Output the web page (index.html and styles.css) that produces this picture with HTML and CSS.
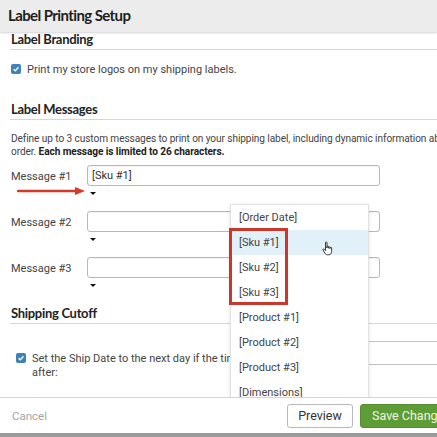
FILE: index.html
```html
<!DOCTYPE html>
<html>
<head>
<meta charset="utf-8">
<link rel="stylesheet" href="styles.css">
</head>
<body>
<div class="dialog">
  <div class="header"><h1 class="title">Label Printing Setup</h1></div>
  <div class="content">
    <section class="sec sec-branding">
      <h2 class="sec-title">Label Branding</h2>
      <label class="check-row">
        <span class="cbox"><svg viewBox="0 0 10 10" width="8" height="8"><path d="M2 5.2 L4.2 7.3 L8 2.8" fill="none" stroke="#fff" stroke-width="1.7"/></svg></span>
        <span>Print my store logos on my shipping labels.</span>
      </label>
    </section>
    <section class="sec sec-messages">
      <h2 class="sec-title">Label Messages</h2>
      <p class="desc">Define up to 3 custom messages to print on your shipping label, including dynamic information about the<br>order. <b>Each message is limited to 26 characters.</b></p>
      <div class="msg-row">
        <span class="msg-label">Message #1</span>
        <div class="msg-field"><div class="input">[Sku #1]</div><span class="caret"></span></div>
      </div>
      <div class="msg-row">
        <span class="msg-label">Message #2</span>
        <div class="msg-field"><div class="input"></div><span class="caret"></span></div>
      </div>
      <div class="msg-row">
        <span class="msg-label">Message #3</span>
        <div class="msg-field"><div class="input"></div><span class="caret"></span></div>
      </div>
    </section>
    <section class="sec sec-cutoff">
      <h2 class="sec-title">Shipping Cutoff</h2>
      <div class="cutoff-row">
        <label class="check-row cutoff-check">
          <span class="cbox"><svg viewBox="0 0 10 10" width="8" height="8"><path d="M2 5.2 L4.2 7.3 L8 2.8" fill="none" stroke="#fff" stroke-width="1.7"/></svg></span>
          <span class="cutoff-text">Set the Ship Date to the next day if the time is after:</span>
        </label>
        <div class="time-box"></div>
      </div>
    </section>
  </div>
  <div class="footer">
    <span class="cancel">Cancel</span>
    <div class="actions">
      <button class="btn btn-preview">Preview</button>
      <button class="btn btn-save">Save Changes</button>
    </div>
  </div>
  <div class="bottom-bar"></div>

  <svg class="annot-arrow" width="70" height="10" viewBox="0 0 70 10">
    <path d="M1 5 H60" stroke="#d23b28" stroke-width="2.4" stroke-linecap="round"/>
    <path d="M58 1 L68 5 L58 9 Z" fill="#d23b28"/>
  </svg>

  <div class="dropdown">
    <div class="dd-item">[Order Date]</div>
    <div class="dd-item active">[Sku #1]</div>
    <div class="dd-item">[Sku #2]</div>
    <div class="dd-item">[Sku #3]</div>
    <div class="dd-item">[Product #1]</div>
    <div class="dd-item">[Product #2]</div>
    <div class="dd-item">[Product #3]</div>
    <div class="dd-item">[Dimensions]</div>
  </div>
  <div class="annot-box"></div>
  <svg class="cursor" width="13" height="15" viewBox="0 0 13 15">
    <path d="M3.5 1.5 C3.5 0.8 5 0.8 5 1.5 V7 V5.8 C5 5.1 6.5 5.1 6.5 5.8 V7.2 V6.3 C6.5 5.6 8 5.6 8 6.3 V7.6 V6.9 C8 6.2 9.6 6.2 9.6 6.9 V10.5 C9.6 12.5 8.5 13.8 6.5 13.8 H5.5 C4.2 13.8 3.5 13 2.8 12 L1 9 C0.6 8.3 1.5 7.6 2.1 8.2 L3.5 9.6 Z" fill="#fff" stroke="#222" stroke-width="0.9" stroke-linejoin="round"/>
  </svg>
</div>
</body>
</html>
```
FILE: styles.css
```css
html, body {
  margin: 0;
  padding: 0;
  width: 437px;
  height: 437px;
  overflow: hidden;
  background: #fff;
}
body {
  font-family: Roboto, "Liberation Sans", Arial, sans-serif;
  color: #333;
}
.dialog {
  position: relative;
  width: 437px;
  height: 437px;
  display: flex;
  flex-direction: column;
  overflow: hidden;
}
.header {
  height: 32px;
  flex: none;
  background: #ececec;
  box-shadow: 0 1px 2px rgba(0,0,0,0.18);
  position: relative;
  z-index: 1;
  display: flex;
  align-items: center;
  padding-left: 8px;
  padding-bottom: 2px;
  box-sizing: border-box;
}
.title {
  margin: 0;
  font-family: Lato, "Liberation Sans", sans-serif;
  font-weight: 700;
  font-size: 15px;
  letter-spacing: -0.6px;
  color: #1e1e1e;
}
.content {
  flex: 1;
  overflow: hidden;
  padding-left: 10px;
  width: 480px;
}
.sec-title {
  margin: 0;
  font-family: Lato, "Liberation Sans", sans-serif;
  font-weight: 700;
  font-size: 13px;
  letter-spacing: -0.3px;
  color: #222;
  height: 17px;
  line-height: 17px;
  padding-left: 1px;
  padding-bottom: 1px;
  border-bottom: 1px solid #d6d6d6;
}
.sec-branding .sec-title { margin-top: -1px; }
.check-row {
  display: flex;
  align-items: flex-start;
  gap: 6px;
  font-size: 11px;
  color: #444;
  line-height: 14px;
}
.sec-branding .check-row {
  margin-top: 13px;
  padding-left: 1px;
}
.cbox {
  width: 10px;
  height: 10px;
  flex: none;
  margin-top: 1px;
  border-radius: 2px;
  background: #3e82b6;
  display: flex;
  align-items: center;
  justify-content: center;
}
.sec-messages { margin-top: 24px; }
.desc {
  margin: 12px 0 0 1px;
  font-size: 10.1px;
  letter-spacing: -0.08px;
  line-height: 13px;
  color: #444;
  width: 480px;
  white-space: nowrap;
}
.desc b { color: #222; font-weight: 700; }
.msg-row {
  display: flex;
  align-items: flex-start;
  height: 46px;
}
.sec-messages .msg-row:first-of-type { margin-top: 7px; }
.msg-label {
  width: 76px;
  flex: none;
  padding-left: 1px;
  font-size: 11px;
  color: #444;
  line-height: 21px;
  margin-top: 1px;
}
.msg-field {
  display: flex;
  flex-direction: column;
}
.input {
  width: 287px;
  height: 19px;
  border: 1px solid #b8b8b8;
  border-radius: 3px;
  font-size: 11px;
  line-height: 19px;
  padding-left: 4px;
  color: #333;
  box-shadow: inset 0 1px 1px rgba(0,0,0,0.05);
}
.caret {
  width: 0;
  height: 0;
  margin: 6px 0 0 3px;
  border-left: 3px solid transparent;
  border-right: 3px solid transparent;
  border-top: 3px solid #111;
}
.sec-cutoff { margin-top: 2px; }
.cutoff-row {
  display: flex;
  align-items: flex-start;
  margin-top: 28px;
}
.cutoff-check { padding-left: 6px; width: 252px; flex: none; }
.cutoff-text { width: 232px; }
.time-box {
  margin-top: -11px;
  margin-left: 40px;
  width: 200px;
  height: 22px;
  border: 1px solid #c4c4c4;
  border-radius: 3px;
}
.footer {
  flex: none;
  height: 35px;
  border-top: 1px solid #d4d4d4;
  display: flex;
  align-items: center;
  justify-content: space-between;
  padding-left: 12px;
  position: relative;
  z-index: 3;
  background: #fff;
}
.cancel {
  font-size: 11.5px;
  color: #a4a4a4;
}
.actions {
  display: flex;
  gap: 7px;
  margin-right: -40px;
}
.btn {
  height: 24px;
  font-family: Roboto, "Liberation Sans", sans-serif;
  font-size: 12.5px;
  border-radius: 3px;
  padding: 0;
}
.btn-preview {
  width: 66px;
  background: #fff;
  border: 1px solid #b9b9b9;
  color: #333;
}
.btn-save {
  width: 117px;
  background: #5e9c35;
  border: 1px solid #558f2f;
  color: #eef6e6;
  text-align: left;
  padding-left: 11px;
}
.bottom-bar {
  flex: none;
  height: 4px;
  background: #9b9b9b;
  position: relative;
  z-index: 3;
}
.annot-arrow {
  position: absolute;
  left: 17px;
  top: 186px;
}
.dropdown {
  position: absolute;
  left: 230px;
  top: 204px;
  width: 137px;
  background: #fff;
  border: 1px solid #e2e2e2;
  box-shadow: 0 1px 4px rgba(0,0,0,0.12);
  z-index: 2;
}
.dd-item {
  height: 25px;
  line-height: 25px;
  padding-left: 8px;
  font-size: 11px;
  color: #444;
}
.dd-item.active { background: #e2f0fa; }
.annot-box {
  position: absolute;
  left: 229px;
  top: 228px;
  width: 53px;
  height: 71px;
  border: 3px solid #c9382a;
  z-index: 2;
}
.cursor {
  position: absolute;
  left: 322px;
  top: 241px;
  z-index: 2;
}
```
